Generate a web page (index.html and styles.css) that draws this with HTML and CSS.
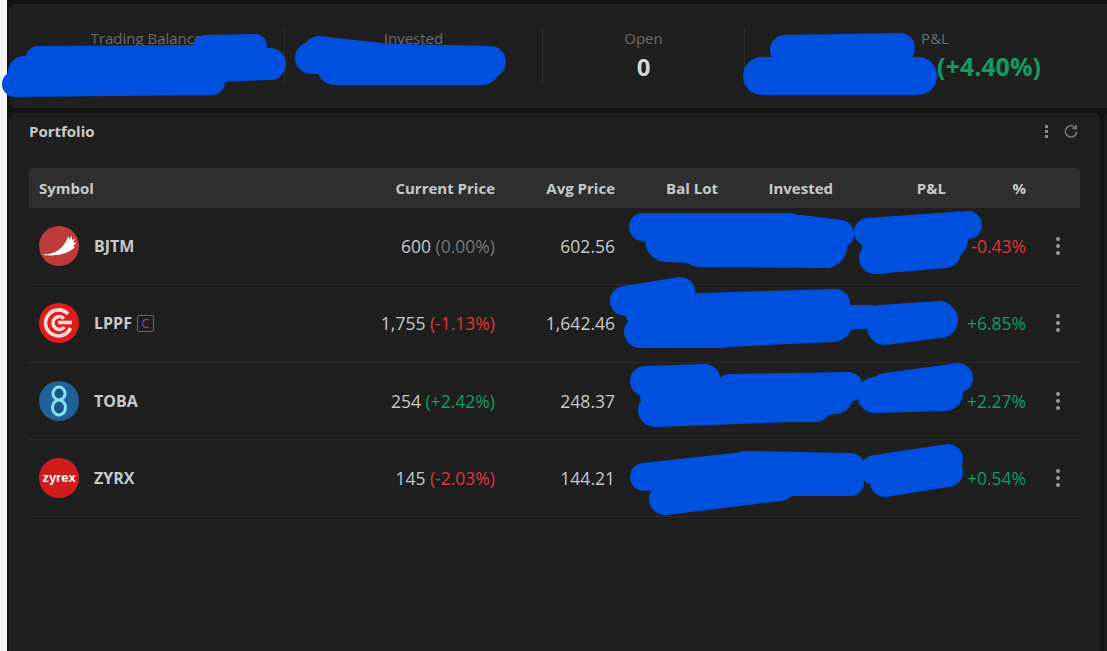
FILE: index.html
```html
<!DOCTYPE html>
<html lang="en">
<head>
    <meta charset="UTF-8">
    <meta name="viewport" content="width=device-width, initial-scale=1.0">
    <title>Portfolio</title>
    <link rel="stylesheet" href="styles.css">
</head>
<body>
    <div class="app">
        <!-- Summary strip -->
        <section class="summary">
            <div class="stat stat-balance">
                <div class="stat-label">Trading Balance</div>
                <div class="stat-value"></div>
            </div>
            <div class="stat stat-invested">
                <div class="stat-label">Invested</div>
                <div class="stat-value"></div>
            </div>
            <div class="stat stat-open">
                <div class="stat-label">Open</div>
                <div class="stat-value">0</div>
            </div>
            <div class="stat stat-pnl">
                <div class="stat-label">P&amp;L</div>
                <div class="stat-value up"><span class="masked"></span>(+4.40%)</div>
            </div>
        </section>

        <div class="lower">
            <section class="portfolio">
                <div class="portfolio-head">
                    <div class="portfolio-title">Portfolio</div>
                    <div class="portfolio-tools">
                        <span class="tool-dots"><i></i><i></i><i></i></span>
                        <svg class="tool-refresh" width="16" height="16" viewBox="0 0 16 16">
                            <path d="M12.6 5.2A5.6 5.6 0 1 0 13.6 8.6" />
                            <path d="M9.6 5.4h3.6V1.8" />
                        </svg>
                    </div>
                </div>

                <div class="table">
                    <div class="row row-head">
                        <div class="cell-symbol">Symbol</div>
                        <div class="num">Current Price</div>
                        <div class="num">Avg Price</div>
                        <div class="num">Bal Lot</div>
                        <div class="num">Invested</div>
                        <div class="num">P&amp;L</div>
                        <div class="num">%</div>
                        <div></div>
                    </div>

                    <div class="row">
                        <div class="cell-symbol">
                            <svg class="logo" viewBox="0 0 40 40">
                                <circle cx="20" cy="20" r="20" fill="#c13a3a" />
                                <path d="M2.500 28.500C13 28.500 23 26 29.500 10L30.500 13.500L33 9.500L33 14L36 12.500L34 16.500L37.500 16.500L34 20L36 21C29 28.500 14 31 2.500 28.500Z" fill="#fff" />
                            </svg>
                            <span class="ticker">BJTM</span>
                        </div>
                        <div class="num">600 <span class="flat">(0.00%)</span></div>
                        <div class="num">602.56</div>
                        <div></div>
                        <div></div>
                        <div></div>
                        <div class="num down">-0.43%</div>
                        <div class="row-menu"><i></i><i></i><i></i></div>
                    </div>

                    <div class="row">
                        <div class="cell-symbol">
                            <svg class="logo" viewBox="0 0 40 40">
                                <circle cx="20" cy="20" r="20" fill="#e31b1b" />
                                <g fill="none" stroke="#fbdcdc" stroke-width="3.600">
                                    <path d="M29 11A13 13 0 1 0 31.500 25" />
                                    <path d="M25 15.500A6.500 6.500 0 1 0 25.500 24" />
                                    <path d="M19 19.500H33" />
                                </g>
                            </svg>
                            <span class="ticker">LPPF</span>
                            <span class="badge">C</span>
                        </div>
                        <div class="num">1,755 <span class="down">(-1.13%)</span></div>
                        <div class="num">1,642.46</div>
                        <div></div>
                        <div></div>
                        <div></div>
                        <div class="num up">+6.85%</div>
                        <div class="row-menu"><i></i><i></i><i></i></div>
                    </div>

                    <div class="row">
                        <div class="cell-symbol">
                            <svg class="logo" viewBox="0 0 40 40">
                                <circle cx="20" cy="20" r="20" fill="#1f6299" />
                                <g fill="#17568a" stroke="#86e3ef" stroke-width="3">
                                    <ellipse cx="20" cy="12.500" rx="6" ry="6.500" />
                                    <ellipse cx="20" cy="26.500" rx="6.500" ry="7.500" />
                                </g>
                            </svg>
                            <span class="ticker">TOBA</span>
                        </div>
                        <div class="num">254 <span class="up">(+2.42%)</span></div>
                        <div class="num">248.37</div>
                        <div></div>
                        <div></div>
                        <div></div>
                        <div class="num up">+2.27%</div>
                        <div class="row-menu"><i></i><i></i><i></i></div>
                    </div>

                    <div class="row">
                        <div class="cell-symbol">
                            <svg class="logo" viewBox="0 0 40 40">
                                <circle cx="20" cy="20" r="20" fill="#d21c1c" />
                                <text x="20" y="24" class="logo-word">zyrex</text>
                            </svg>
                            <span class="ticker">ZYRX</span>
                        </div>
                        <div class="num">145 <span class="down">(-2.03%)</span></div>
                        <div class="num">144.21</div>
                        <div></div>
                        <div></div>
                        <div></div>
                        <div class="num up">+0.54%</div>
                        <div class="row-menu"><i></i><i></i><i></i></div>
                    </div>
                </div>
            </section>
            <div class="side-panel"></div>
        </div>
    </div>

    <!-- Marker scribbles drawn over the screenshot -->
    <svg class="scribbles" width="1107" height="651" viewBox="0 0 1107 651">
        <g>
            <line x1="15" y1="84" x2="212" y2="82" stroke-width="26" />
            <line x1="24" y1="72" x2="270" y2="64" stroke-width="32" />
            <line x1="38" y1="58" x2="195" y2="57" stroke-width="24" />
            <line x1="205" y1="47" x2="255" y2="46" stroke-width="24" />
            <line x1="195" y1="57" x2="255" y2="50" stroke-width="24" />
        </g>
        <g>
            <line x1="318" y1="49" x2="380" y2="56" stroke-width="26" />
            <line x1="311" y1="58" x2="490" y2="62" stroke-width="32" />
            <line x1="335" y1="67" x2="482" y2="67" stroke-width="36" />
        </g>
        <g>
            <line x1="785" y1="50" x2="900" y2="48" stroke-width="30" />
            <line x1="762" y1="76" x2="918" y2="76" stroke-width="38" />
        </g>
        <g>
            <line x1="643" y1="227" x2="790" y2="227" stroke-width="28" />
            <line x1="800" y1="229" x2="840" y2="234" stroke-width="28" />
            <line x1="667" y1="240" x2="825" y2="246" stroke-width="44" />
            <line x1="700" y1="245" x2="825" y2="246" stroke-width="44" />
            <line x1="868" y1="232" x2="968" y2="225" stroke-width="28" />
            <line x1="880" y1="245" x2="950" y2="240" stroke-width="36" />
            <line x1="875" y1="258" x2="945" y2="252" stroke-width="32" />
        </g>
        <g>
            <line x1="625" y1="301" x2="680" y2="292" stroke-width="30" />
            <line x1="640" y1="312" x2="720" y2="310" stroke-width="30" />
            <line x1="640" y1="332" x2="720" y2="332" stroke-width="32" />
            <line x1="700" y1="308" x2="835" y2="304" stroke-width="30" />
            <line x1="725" y1="327" x2="833" y2="322" stroke-width="40" />
            <line x1="840" y1="317" x2="870" y2="317" stroke-width="24" />
            <line x1="880" y1="320" x2="940" y2="316" stroke-width="30" />
            <line x1="885" y1="327" x2="940" y2="320" stroke-width="36" />
        </g>
        <g>
            <line x1="645" y1="381" x2="705" y2="379" stroke-width="30" />
            <line x1="655" y1="395" x2="750" y2="395" stroke-width="30" />
            <line x1="655" y1="410" x2="790" y2="405" stroke-width="34" />
            <line x1="700" y1="405" x2="815" y2="405" stroke-width="34" />
            <line x1="730" y1="389" x2="848" y2="387" stroke-width="30" />
            <line x1="800" y1="400" x2="835" y2="396" stroke-width="36" />
            <line x1="885" y1="388" x2="958" y2="378" stroke-width="30" />
            <line x1="875" y1="395" x2="945" y2="393" stroke-width="36" />
        </g>
        <g>
            <line x1="644" y1="477" x2="745" y2="466" stroke-width="28" />
            <line x1="745" y1="467" x2="850" y2="469" stroke-width="32" />
            <line x1="665" y1="499" x2="780" y2="485" stroke-width="32" />
            <line x1="680" y1="484" x2="790" y2="482" stroke-width="28" />
            <line x1="790" y1="482" x2="850" y2="482" stroke-width="28" />
            <line x1="875" y1="470" x2="948" y2="459" stroke-width="30" />
            <line x1="885" y1="482" x2="948" y2="472" stroke-width="30" />
        </g>
    </svg>
</body>
</html>
```

FILE: styles.css
```css
* {
    box-sizing: border-box;
}

html, body {
    height: 100%;
}

body {
    margin: 0;
    position: relative;
    overflow: hidden;
    background: #f4f4f4;
    font-family: 'Open Sans', 'Noto Sans', sans-serif;
    font-size: 17.500px;
    color: #c9c9c9;
}

.app {
    margin-left: 7px;
    height: 100%;
    padding: 4px 0 0 2px;
    background: #121212;
    display: flex;
    flex-direction: column;
    gap: 5px;
}

/* Summary strip */
.summary {
    height: 104px;
    flex: none;
    padding-top: 24px;
    display: flex;
    align-items: flex-start;
    background: #1f1f1f;
    border-radius: 6px 0 0 6px;
}

.stat {
    height: 55px;
    flex: none;
    text-align: center;
    border-right: 1px solid #2e2e2e;
}

.stat-balance {
    width: 276px;
}

.stat-invested {
    width: 258px;
}

.stat-open {
    width: 202px;
}

.stat-pnl {
    flex: 1;
    border-right: none;
    padding-left: 18px;
    white-space: nowrap;
}

.stat-label {
    font-size: 15px;
    line-height: 20px;
    color: #6b6b6b;
}

.stat-value {
    margin-top: 2px;
    font-size: 24px;
    font-weight: 700;
    line-height: 33px;
    color: #d6d6d6;
}

.stat-value.up {
    font-size: 25px;
    color: #0f9d62;
}

.masked {
    display: inline-block;
    width: 108px;
}

/* Portfolio panel */
.lower {
    flex: 1;
    display: flex;
    gap: 4px;
    min-height: 0;
}

.portfolio {
    width: 1091px;
    flex: none;
    background: #1f1f1f;
    border-radius: 6px 6px 0 0;
    padding: 0 20px;
}

.side-panel {
    flex: 1;
    background: #1b1b1b;
    border-radius: 6px 0 0 0;
}

.portfolio-head {
    height: 55px;
    display: flex;
    justify-content: space-between;
    align-items: flex-start;
}

.portfolio-title {
    height: 35px;
    margin-left: -20px;
    padding: 0 20px;
    font-size: 15px;
    font-weight: 700;
    line-height: 37px;
    border-radius: 0 0 8px 0;
    border-right: 1px solid #1c1c1c;
    border-bottom: 1px solid #1c1c1c;
}

.portfolio-tools {
    display: flex;
    align-items: center;
    gap: 15px;
    height: 36px;
    margin-right: 1px;
}

.tool-dots {
    display: flex;
    flex-direction: column;
    gap: 2px;
}

.tool-dots i {
    display: block;
    width: 3px;
    height: 3px;
    background: #8a8a8a;
}

.tool-refresh {
    fill: none;
    stroke: #787878;
    stroke-width: 1.600;
}

/* Table */
.row {
    display: grid;
    grid-template-columns: 180px 286px 120px 103px 115px 113px 80px 54px;
    align-items: center;
    height: 77.250px;
    border-bottom: 1px solid #2c2c2c;
}

.row-head {
    height: 40px;
    background: #2f2f2f;
    border-bottom: none;
    border-radius: 4px 4px 0 0;
    font-size: 15px;
    font-weight: 700;
    color: #c9c9c9;
}

.cell-symbol {
    display: flex;
    align-items: center;
    padding-left: 10px;
}

.logo {
    width: 40px;
    height: 40px;
    margin-right: 15px;
    flex: none;
}

.logo-word {
    font-family: 'Liberation Sans', sans-serif;
    font-size: 13px;
    font-weight: 700;
    fill: #fff;
    text-anchor: middle;
}

.ticker {
    font-weight: 700;
    font-size: 16px;
}

.badge {
    width: 17px;
    height: 17px;
    margin-left: 5px;
    border: 1.500px solid #8a3fd0;
    border-radius: 2px;
    color: #8a3fd0;
    font-size: 13px;
    line-height: 14px;
    text-align: center;
}

.num {
    text-align: right;
    white-space: nowrap;
}

.up {
    color: #0f9d62;
}

.down {
    color: #e03535;
}

.flat {
    color: #777;
}

.row-menu {
    display: flex;
    flex-direction: column;
    align-items: center;
    gap: 3px;
    padding-left: 10px;
}

.row-menu i {
    display: block;
    width: 4px;
    height: 4px;
    border-radius: 50%;
    background: #9a9a9a;
}

/* Marker scribbles */
.scribbles {
    position: absolute;
    top: 0;
    left: 0;
}

.scribbles line {
    stroke: #0050e0;
    stroke-linecap: round;
}
```
